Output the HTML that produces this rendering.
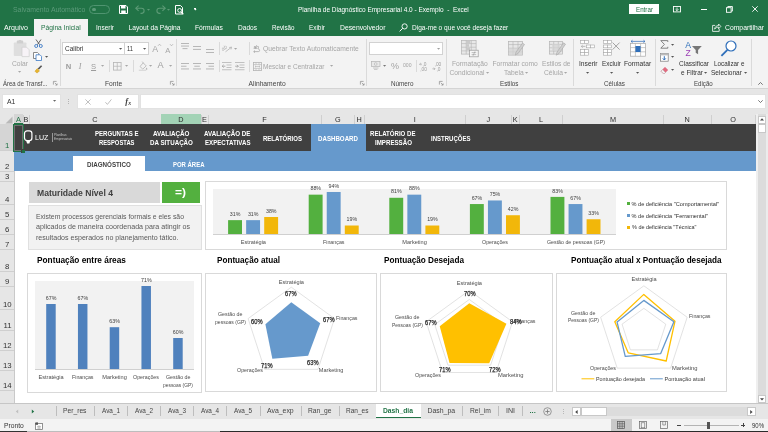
<!DOCTYPE html>
<html lang="pt-BR"><head><meta charset="utf-8"><title>Planilha de Diagnóstico Empresarial 4.0 - Exemplo - Excel</title>
<style>
html,body{margin:0;padding:0;}
body{width:768px;height:432px;overflow:hidden;background:#e6e6e6;font-family:"Liberation Sans",sans-serif;position:relative;}
.b{position:absolute;box-sizing:border-box;display:block;}
.t{position:absolute;white-space:nowrap;transform-origin:0 50%;display:block;}
svg{overflow:visible;}
</style></head><body><div id="app" class="b" style="left:0;top:0;width:768px;height:432px;will-change:transform;">
<div class="b " style="left:0.00px;top:0.00px;width:768.00px;height:36.00px;background:#217346;"></div>
<span class="t" style="left:13.00px;top:5.78px;font-size:6.7px;line-height:8.04px;color:#5c9a7a;transform:scaleX(1.030);">Salvamento Automático</span>
<div class="b" style="left:89px;top:4.5px;width:21px;height:9.5px;border:1px solid #4f9470;border-radius:5px;"></div>
<div class="b " style="left:92.00px;top:7.50px;width:3.50px;height:3.50px;background:#5d9c7a;border-radius:2px;"></div>
<svg class="b" style="left:119.00px;top:4.50px;" width="9" height="9" viewBox="0 0 9 9"><path d="M0.5 0.5h6.5l1.5 1.5v6.5h-8z" fill="none" stroke="#fff" stroke-width="1"/><rect x="2" y="0.5" width="4.5" height="3" fill="#fff"/><rect x="2.2" y="5.5" width="4.5" height="3" fill="#fff"/></svg>
<svg class="b" style="left:135.00px;top:5.00px;" width="11" height="8" viewBox="0 0 11 8"><path d="M1 3.2h5.5a2.6 2.6 0 0 1 0 5.2h-1" fill="none" stroke="#5c9a76" stroke-width="1.1"/><path d="M3.6 0.6L0.8 3.2l2.8 2.6" fill="none" stroke="#5c9a76" stroke-width="1.1"/></svg>
<svg class="b" style="left:147.00px;top:8.50px;" width="3" height="2" viewBox="0 0 3 2"><path d="M0 0h3l-1.5 1.8z" fill="#5c9a76"/></svg>
<svg class="b" style="left:155.00px;top:5.00px;" width="11" height="8" viewBox="0 0 11 8"><path d="M10 3.2h-5.5a2.6 2.6 0 0 0 0 5.2h1" fill="none" stroke="#5c9a76" stroke-width="1.1"/><path d="M7.4 0.6L10.2 3.2l-2.8 2.6" fill="none" stroke="#5c9a76" stroke-width="1.1"/></svg>
<svg class="b" style="left:167.00px;top:8.50px;" width="3" height="2" viewBox="0 0 3 2"><path d="M0 0h3l-1.5 1.8z" fill="#5c9a76"/></svg>
<svg class="b" style="left:175.00px;top:4.50px;" width="9" height="10" viewBox="0 0 9 10"><path d="M0.5 0.5h5l2 2v6.5h-7z" fill="none" stroke="#fff" stroke-width="1"/><circle cx="4.6" cy="5.4" r="1.9" fill="#217346" stroke="#fff" stroke-width="1"/><path d="M6 6.9l2.3 2.4" stroke="#fff" stroke-width="1.3"/></svg>
<div class="b " style="left:193.50px;top:7.50px;width:2.50px;height:0.80px;background:#fff;"></div>
<svg class="b" style="left:193.50px;top:9.00px;" width="3" height="2" viewBox="0 0 3 2"><path d="M0 0h2.6l-1.3 1.6z" fill="#fff"/></svg>
<span class="t" style="left:298.00px;top:5.88px;font-size:6.7px;line-height:8.04px;color:#fff;transform:scaleX(0.967);white-space:pre;">Planilha de Diagnóstico Empresarial 4.0 - Exemplo  -  Excel</span>
<div class="b " style="left:629.00px;top:3.50px;width:30.00px;height:10.50px;background:#fff;"></div>
<span class="t" style="left:635.50px;top:5.58px;font-size:6.7px;line-height:8.04px;color:#217346;transform:scaleX(0.932);">Entrar</span>
<svg class="b" style="left:673.00px;top:5.50px;" width="8" height="7" viewBox="0 0 8 7"><rect x="0.5" y="0.5" width="7" height="5.4" fill="none" stroke="#fff" stroke-width="0.9"/><path d="M4 1.5v3M2.6 3.3L4 4.7l1.4-1.4" fill="none" stroke="#fff" stroke-width="0.8"/></svg>
<div class="b " style="left:700.50px;top:9.00px;width:6.00px;height:0.90px;background:#fff;"></div>
<svg class="b" style="left:726.00px;top:5.50px;" width="7" height="7" viewBox="0 0 7 7"><rect x="0.5" y="1.7" width="4.6" height="4.6" fill="none" stroke="#fff" stroke-width="0.9"/><path d="M1.8 1.7v-1.2h4.6v4.6h-1.3" fill="none" stroke="#fff" stroke-width="0.9"/></svg>
<svg class="b" style="left:752.00px;top:6.00px;" width="6" height="6" viewBox="0 0 6 6"><path d="M0.3 0.3l5.4 5.4M5.7 0.3l-5.4 5.4" stroke="#fff" stroke-width="0.9"/></svg>
<div class="b " style="left:34.00px;top:19.00px;width:54.00px;height:17.00px;background:#f3f3f3;"></div>
<span class="t" style="left:4.00px;top:23.88px;font-size:6.7px;line-height:8.04px;color:#fff;transform:scaleX(1.056);">Arquivo</span>
<span class="t" style="left:41.00px;top:23.88px;font-size:6.7px;line-height:8.04px;color:#217346;">Página Inicial</span>
<span class="t" style="left:96.00px;top:23.88px;font-size:6.7px;line-height:8.04px;color:#fff;transform:scaleX(0.967);">Inserir</span>
<span class="t" style="left:128.50px;top:23.88px;font-size:6.7px;line-height:8.04px;color:#fff;">Layout da Página</span>
<span class="t" style="left:195.00px;top:23.88px;font-size:6.7px;line-height:8.04px;color:#fff;">Fórmulas</span>
<span class="t" style="left:238.00px;top:23.88px;font-size:6.7px;line-height:8.04px;color:#fff;transform:scaleX(0.981);">Dados</span>
<span class="t" style="left:272.00px;top:23.88px;font-size:6.7px;line-height:8.04px;color:#fff;transform:scaleX(0.930);">Revisão</span>
<span class="t" style="left:309.00px;top:23.88px;font-size:6.7px;line-height:8.04px;color:#fff;transform:scaleX(0.955);">Exibir</span>
<span class="t" style="left:340.00px;top:23.88px;font-size:6.7px;line-height:8.04px;color:#fff;transform:scaleX(1.018);">Desenvolvedor</span>
<svg class="b" style="left:399.00px;top:22.50px;" width="9" height="9" viewBox="0 0 9 9"><circle cx="5.6" cy="3.4" r="2.6" fill="none" stroke="#fff" stroke-width="0.9"/><path d="M3.7 5.3L0.6 8.4" stroke="#fff" stroke-width="1"/></svg>
<span class="t" style="left:411.50px;top:23.88px;font-size:6.7px;line-height:8.04px;color:#fff;transform:scaleX(0.981);">Diga-me o que você deseja fazer</span>
<svg class="b" style="left:711.50px;top:22.50px;" width="9" height="9" viewBox="0 0 9 9"><path d="M3.2 2.4h-2.6v6h6.6v-2.4" fill="none" stroke="#fff" stroke-width="0.8"/><path d="M2.6 6.2c0.3-2.4 1.8-3.6 4-3.6v-1.6l2.2 2.4-2.2 2.4v-1.6c-1.8 0-3 0.6-4 2z" fill="none" stroke="#fff" stroke-width="0.8"/></svg>
<span class="t" style="left:725.00px;top:23.88px;font-size:6.7px;line-height:8.04px;color:#fff;transform:scaleX(1.017);">Compartilhar</span>
<div class="b " style="left:0.00px;top:36.00px;width:768.00px;height:52.00px;background:#f3f3f3;"></div>
<div class="b " style="left:0.00px;top:88.00px;width:768.00px;height:0.80px;background:#d4d4d4;"></div>
<svg class="b" style="left:12.50px;top:40.00px;" width="17" height="18" viewBox="0 0 17 18"><rect x="0.8" y="2.4" width="12.6" height="13.6" rx="0.8" fill="#dedede"/><rect x="3.8" y="0.6" width="6.4" height="3" rx="0.9" fill="#cfcfcf"/><rect x="5.6" y="0" width="2.8" height="1.6" rx="0.8" fill="#cfcfcf"/><path d="M9 7.2h4.6l2.6 2.6v6.8H9z" fill="#f7f3f7" stroke="#cfcfcf" stroke-width="0.7"/></svg>
<span class="t" style="left:12.00px;top:59.88px;font-size:6.7px;line-height:8.04px;color:#a6a6a6;">Colar</span>
<svg class="b" style="left:18.40px;top:70.60px;" width="3.2" height="1.8" viewBox="0 0 3.2 1.8"><path d="M0 0h3.2l-1.6 1.8z" fill="#a6a6a6"/></svg>
<svg class="b" style="left:33.80px;top:39.00px;" width="9" height="9" viewBox="0 0 9 9"><path d="M2 0.5l3.6 5.2M7 0.5L3.4 5.7" stroke="#555" stroke-width="0.9" fill="none"/><circle cx="2.2" cy="7" r="1.5" fill="none" stroke="#3b78c4" stroke-width="0.9"/><circle cx="6.8" cy="7" r="1.5" fill="none" stroke="#3b78c4" stroke-width="0.9"/></svg>
<svg class="b" style="left:33.00px;top:52.00px;" width="9" height="9" viewBox="0 0 9 9"><path d="M0.5 0.5h4l1.2 1.2v4.8h-5.2z" fill="#fff" stroke="#6d6d6d" stroke-width="0.8"/><path d="M3 2.8h4l1.5 1.5v4.2h-5.5z" fill="#fff" stroke="#3b78c4" stroke-width="0.8"/></svg>
<svg class="b" style="left:44.90px;top:55.90px;" width="3.2" height="1.8" viewBox="0 0 3.2 1.8"><path d="M0 0h3.2l-1.6 1.8z" fill="#555"/></svg>
<svg class="b" style="left:34.00px;top:65.00px;" width="9" height="9" viewBox="0 0 9 9"><path d="M7.6 0.8L4.3 4.1" stroke="#555" stroke-width="1.6"/><path d="M1 6.2l2.2-2.6 2.3 2.3-2.6 2.2z" fill="#e8b52e" stroke="#c8961c" stroke-width="0.5"/></svg>
<span class="t" style="left:3.00px;top:79.58px;font-size:6.7px;line-height:8.04px;color:#444444;transform:scaleX(0.898);">Área de Transf...</span>
<svg class="b" style="left:53.00px;top:81.00px;" width="4.5" height="4.5" viewBox="0 0 4.5 4.5"><path d="M0.4 3.6v-3.2h3.2" fill="none" stroke="#8a8a8a" stroke-width="0.7"/><path d="M1.8 1.8l2.2 2.2M4.1 2.4v1.7h-1.7" fill="none" stroke="#8a8a8a" stroke-width="0.7"/></svg>
<div class="b " style="left:59.50px;top:39.00px;width:0.80px;height:47.00px;background:#dadada;"></div>
<div class="b" style="left:62px;top:42px;width:63px;height:13px;background:#fff;border:1px solid #d2d2d2;"></div>
<span class="t" style="left:64.50px;top:45.28px;font-size:6.7px;line-height:8.04px;color:#333;transform:scaleX(0.974);">Calibri</span>
<svg class="b" style="left:118.70px;top:47.80px;" width="3.2" height="1.8" viewBox="0 0 3.2 1.8"><path d="M0 0h3.2l-1.6 1.8z" fill="#555"/></svg>
<div class="b" style="left:124px;top:42px;width:25px;height:13px;background:#fff;border:1px solid #d2d2d2;"></div>
<span class="t" style="left:127.00px;top:45.28px;font-size:6.7px;line-height:8.04px;color:#333;transform:scaleX(0.863);">11</span>
<svg class="b" style="left:142.70px;top:47.80px;" width="3.2" height="1.8" viewBox="0 0 3.2 1.8"><path d="M0 0h3.2l-1.6 1.8z" fill="#555"/></svg>
<span class="t" style="left:152.30px;top:44.32px;font-size:8.8px;line-height:10.56px;color:#a6a6a6;">A</span>
<svg class="b" style="left:158.00px;top:43.50px;" width="3" height="2" viewBox="0 0 3 2"><path d="M0 1.8l1.5-1.6 1.5 1.6" fill="none" stroke="#a6a6a6" stroke-width="0.7"/></svg>
<span class="t" style="left:165.30px;top:45.54px;font-size:7.6px;line-height:9.12px;color:#a6a6a6;">A</span>
<svg class="b" style="left:170.00px;top:43.50px;" width="3" height="2" viewBox="0 0 3 2"><path d="M0 0.2l1.5 1.6 1.5-1.6" fill="none" stroke="#a6a6a6" stroke-width="0.7"/></svg>
<span class="t" style="left:65.80px;top:62.04px;font-size:7.6px;line-height:9.12px;color:#9c9c9c;font-weight:bold;">N</span>
<span class="t" style="left:78.80px;top:61.80px;font-size:8px;line-height:9.60px;color:#9c9c9c;font-style:italic;font-family:&quot;Liberation Serif&quot;,serif;">I</span>
<span class="t" style="left:91.00px;top:62.04px;font-size:7.6px;line-height:9.12px;color:#9c9c9c;text-decoration:underline;">S</span>
<svg class="b" style="left:100.90px;top:65.40px;" width="3.2" height="1.8" viewBox="0 0 3.2 1.8"><path d="M0 0h3.2l-1.6 1.8z" fill="#a6a6a6"/></svg>
<div class="b " style="left:108.50px;top:60.00px;width:0.80px;height:12.00px;background:#dadada;"></div>
<svg class="b" style="left:113.00px;top:61.80px;" width="8.5" height="8.5" viewBox="0 0 8.5 8.5"><rect x="0.4" y="0.4" width="7.7" height="7.7" fill="none" stroke="#b4b4b4" stroke-width="0.8"/><path d="M4.25 0.4v7.7M0.4 4.25h7.7" stroke="#b4b4b4" stroke-width="0.7"/></svg>
<svg class="b" style="left:124.90px;top:65.40px;" width="3.2" height="1.8" viewBox="0 0 3.2 1.8"><path d="M0 0h3.2l-1.6 1.8z" fill="#a6a6a6"/></svg>
<div class="b " style="left:132.50px;top:60.00px;width:0.80px;height:12.00px;background:#dadada;"></div>
<svg class="b" style="left:137.50px;top:61.00px;" width="10" height="10" viewBox="0 0 10 10"><path d="M2 5.5l3.2-3.6 3 3-3.4 3.2z" fill="none" stroke="#b4b4b4" stroke-width="0.8"/><path d="M4.2 0.6l1.4 1.6" stroke="#b4b4b4" stroke-width="0.8"/><rect x="0.8" y="8.6" width="7.4" height="1.3" fill="#d9d9d9"/><path d="M8.6 6.4c0.5 0.8 0.8 1.2 0.8 1.6a0.8 0.8 0 0 1-1.6 0c0-0.4 0.3-0.8 0.8-1.6z" fill="#b4b4b4"/></svg>
<svg class="b" style="left:149.40px;top:65.40px;" width="3.2" height="1.8" viewBox="0 0 3.2 1.8"><path d="M0 0h3.2l-1.6 1.8z" fill="#a6a6a6"/></svg>
<span class="t" style="left:157.60px;top:60.28px;font-size:9.2px;line-height:11.04px;color:#a0a0a0;">A</span>
<svg class="b" style="left:168.70px;top:65.40px;" width="3.2" height="1.8" viewBox="0 0 3.2 1.8"><path d="M0 0h3.2l-1.6 1.8z" fill="#a6a6a6"/></svg>
<span class="t" style="left:105.00px;top:79.58px;font-size:6.7px;line-height:8.04px;color:#444444;">Fonte</span>
<svg class="b" style="left:170.00px;top:81.00px;" width="4.5" height="4.5" viewBox="0 0 4.5 4.5"><path d="M0.4 3.6v-3.2h3.2" fill="none" stroke="#8a8a8a" stroke-width="0.7"/><path d="M1.8 1.8l2.2 2.2M4.1 2.4v1.7h-1.7" fill="none" stroke="#8a8a8a" stroke-width="0.7"/></svg>
<div class="b " style="left:176.00px;top:39.00px;width:0.80px;height:47.00px;background:#dadada;"></div>
<svg class="b" style="left:181.00px;top:43.40px;" width="9" height="8" viewBox="0 0 9 8"><rect x="0" y="0.00" width="8" height="0.9" fill="#b0b0b0"/><rect x="0" y="2.60" width="8" height="0.9" fill="#b0b0b0"/><rect x="1.5" y="5.20" width="5" height="0.9" fill="#b0b0b0"/></svg>
<svg class="b" style="left:193.30px;top:46.00px;" width="9" height="8" viewBox="0 0 9 8"><rect x="0" y="0.00" width="8" height="0.9" fill="#b0b0b0"/><rect x="0" y="2.90" width="8" height="0.9" fill="#b0b0b0"/></svg>
<svg class="b" style="left:205.80px;top:48.60px;" width="9" height="8" viewBox="0 0 9 8"><rect x="0" y="0.00" width="8" height="0.9" fill="#b0b0b0"/><rect x="0" y="3.00" width="8" height="0.9" fill="#b0b0b0"/></svg>
<div class="b " style="left:218.50px;top:42.00px;width:0.80px;height:13.00px;background:#dadada;"></div>
<svg class="b" style="left:222.00px;top:42.50px;" width="11" height="10" viewBox="0 0 11 10"><text x="0" y="6.5" font-size="5.5" fill="#b4b4b4" font-style="italic" transform="rotate(-35 3 6)">ab</text><path d="M3.5 8.8l6-4.6M9.5 4.2l-2.3 0.3M9.5 4.2l-0.5 2.2" stroke="#b4b4b4" stroke-width="0.8" fill="none"/></svg>
<svg class="b" style="left:233.90px;top:47.90px;" width="3.2" height="1.8" viewBox="0 0 3.2 1.8"><path d="M0 0h3.2l-1.6 1.8z" fill="#a6a6a6"/></svg>
<div class="b " style="left:248.50px;top:42.00px;width:0.80px;height:13.00px;background:#dadada;"></div>
<svg class="b" style="left:253.00px;top:43.50px;" width="9" height="10" viewBox="0 0 9 10"><text x="0.5" y="4.6" font-size="5" fill="#8c8c8c">ab</text><path d="M0.8 7.6h4.6a1.2 1.2 0 0 0 0-2.4" fill="none" stroke="#a0a0a0" stroke-width="0.7"/><path d="M2 6.5l-1.3 1.1 1.3 1.1" fill="none" stroke="#a0a0a0" stroke-width="0.7"/></svg>
<span class="t" style="left:263.00px;top:45.28px;font-size:6.7px;line-height:8.04px;color:#a6a6a6;">Quebrar Texto Automaticamente</span>
<svg class="b" style="left:181.00px;top:63.00px;" width="9" height="8" viewBox="0 0 9 8"><rect x="0" y="0.00" width="8" height="0.9" fill="#b0b0b0"/><rect x="0" y="2.75" width="5.5" height="0.9" fill="#b0b0b0"/><rect x="0" y="5.50" width="8" height="0.9" fill="#b0b0b0"/></svg>
<svg class="b" style="left:193.30px;top:63.00px;" width="9" height="8" viewBox="0 0 9 8"><rect x="0" y="0.00" width="8" height="0.9" fill="#b0b0b0"/><rect x="1.3" y="2.75" width="5.5" height="0.9" fill="#b0b0b0"/><rect x="0" y="5.50" width="8" height="0.9" fill="#b0b0b0"/></svg>
<svg class="b" style="left:205.80px;top:63.00px;" width="9" height="8" viewBox="0 0 9 8"><rect x="0" y="0.00" width="8" height="0.9" fill="#b0b0b0"/><rect x="2.5" y="2.75" width="5.5" height="0.9" fill="#b0b0b0"/><rect x="0" y="5.50" width="8" height="0.9" fill="#b0b0b0"/></svg>
<div class="b " style="left:218.50px;top:60.00px;width:0.80px;height:12.00px;background:#dadada;"></div>
<svg class="b" style="left:222.00px;top:62.00px;" width="10" height="9" viewBox="0 0 10 9"><rect x="0" y="0.2" width="9.5" height="0.8" fill="#b4b4b4"/><rect x="4.5" y="2.6" width="5" height="0.8" fill="#b4b4b4"/><rect x="4.5" y="5" width="5" height="0.8" fill="#b4b4b4"/><rect x="0" y="7.4" width="9.5" height="0.8" fill="#b4b4b4"/><path d="M3.4 4.2h-3M1.6 2.8l-1.4 1.4 1.4 1.4" stroke="#9a9a9a" stroke-width="0.8" fill="none"/></svg>
<svg class="b" style="left:235.00px;top:62.00px;" width="10" height="9" viewBox="0 0 10 9"><rect x="0" y="0.2" width="9.5" height="0.8" fill="#b4b4b4"/><rect x="4.5" y="2.6" width="5" height="0.8" fill="#b4b4b4"/><rect x="4.5" y="5" width="5" height="0.8" fill="#b4b4b4"/><rect x="0" y="7.4" width="9.5" height="0.8" fill="#b4b4b4"/><path d="M0.2 4.2h3M2 2.8l1.4 1.4-1.4 1.4" stroke="#9a9a9a" stroke-width="0.8" fill="none"/></svg>
<div class="b " style="left:248.50px;top:60.00px;width:0.80px;height:12.00px;background:#dadada;"></div>
<svg class="b" style="left:252.50px;top:61.50px;" width="9" height="9" viewBox="0 0 9 9"><rect x="0.4" y="0.4" width="8.2" height="8.2" fill="none" stroke="#b4b4b4" stroke-width="0.8"/><path d="M0.4 2.6h8.2M0.4 6.4h8.2M3 0.4v2.2M6 0.4v2.2M3 6.4v2.2M6 6.4v2.2" stroke="#b4b4b4" stroke-width="0.6"/><path d="M2 4.5h5M3 3.6l-1 0.9 1 0.9M6 3.6l1 0.9-1 0.9" stroke="#b4b4b4" stroke-width="0.6" fill="none"/></svg>
<span class="t" style="left:263.00px;top:62.58px;font-size:6.7px;line-height:8.04px;color:#a6a6a6;transform:scaleX(0.972);">Mesclar e Centralizar</span>
<svg class="b" style="left:329.90px;top:65.40px;" width="3.2" height="1.8" viewBox="0 0 3.2 1.8"><path d="M0 0h3.2l-1.6 1.8z" fill="#a6a6a6"/></svg>
<span class="t" style="left:248.50px;top:79.58px;font-size:6.7px;line-height:8.04px;color:#444444;">Alinhamento</span>
<svg class="b" style="left:360.00px;top:81.00px;" width="4.5" height="4.5" viewBox="0 0 4.5 4.5"><path d="M0.4 3.6v-3.2h3.2" fill="none" stroke="#8a8a8a" stroke-width="0.7"/><path d="M1.8 1.8l2.2 2.2M4.1 2.4v1.7h-1.7" fill="none" stroke="#8a8a8a" stroke-width="0.7"/></svg>
<div class="b " style="left:366.00px;top:39.00px;width:0.80px;height:47.00px;background:#dadada;"></div>
<div class="b" style="left:369px;top:42px;width:74px;height:13px;background:#fff;border:1px solid #d2d2d2;"></div>
<svg class="b" style="left:436.90px;top:47.80px;" width="3.2" height="1.8" viewBox="0 0 3.2 1.8"><path d="M0 0h3.2l-1.6 1.8z" fill="#a0a0a0"/></svg>
<svg class="b" style="left:371.00px;top:61.00px;" width="10" height="9" viewBox="0 0 10 9"><rect x="0.4" y="0.4" width="8.6" height="5.2" fill="#e9e9e9" stroke="#b4b4b4" stroke-width="0.7"/><circle cx="4.7" cy="3" r="1.4" fill="none" stroke="#b4b4b4" stroke-width="0.6"/><path d="M2 7h5.5M3 8.4h3.5" stroke="#b4b4b4" stroke-width="0.7"/></svg>
<svg class="b" style="left:382.90px;top:65.40px;" width="3.2" height="1.8" viewBox="0 0 3.2 1.8"><path d="M0 0h3.2l-1.6 1.8z" fill="#777"/></svg>
<span class="t" style="left:391.00px;top:60.80px;font-size:9px;line-height:10.80px;color:#a3a3a3;">%</span>
<span class="t" style="left:403.00px;top:62.44px;font-size:5.6px;line-height:6.72px;color:#a3a3a3;transform:scaleX(0.910);">000</span>
<div class="b " style="left:415.50px;top:60.00px;width:0.80px;height:12.00px;background:#dadada;"></div>
<svg class="b" style="left:419.00px;top:61.50px;" width="10" height="9" viewBox="0 0 10 9"><text x="3.4" y="4" font-size="4.8" fill="#9c9c9c">,0</text><text x="1.2" y="8.6" font-size="4.8" fill="#9c9c9c">,00</text><path d="M3 2.2h-2.4M1.8 1l-1.2 1.2 1.2 1.2" stroke="#9c9c9c" stroke-width="0.6" fill="none"/></svg>
<svg class="b" style="left:432.00px;top:61.50px;" width="10" height="9" viewBox="0 0 10 9"><text x="2.6" y="4" font-size="4.8" fill="#9c9c9c">,00</text><text x="4.4" y="8.6" font-size="4.8" fill="#9c9c9c">,0</text><path d="M0.4 6.8h2.6M1.8 5.6l1.2 1.2-1.2 1.2" stroke="#9c9c9c" stroke-width="0.6" fill="none"/></svg>
<span class="t" style="left:390.50px;top:79.58px;font-size:6.7px;line-height:8.04px;color:#444444;transform:scaleX(0.944);">Número</span>
<svg class="b" style="left:439.00px;top:81.00px;" width="4.5" height="4.5" viewBox="0 0 4.5 4.5"><path d="M0.4 3.6v-3.2h3.2" fill="none" stroke="#8a8a8a" stroke-width="0.7"/><path d="M1.8 1.8l2.2 2.2M4.1 2.4v1.7h-1.7" fill="none" stroke="#8a8a8a" stroke-width="0.7"/></svg>
<div class="b " style="left:445.50px;top:39.00px;width:0.80px;height:47.00px;background:#dadada;"></div>
<svg class="b" style="left:461.00px;top:40.00px;" width="18" height="18" viewBox="0 0 18 18"><rect x="0.4" y="0.4" width="14.7" height="13.7" fill="#e8e8e8" stroke="#b4b4b4" stroke-width="0.7"/><path d="M0.4 3.6h14.7" stroke="#b4b4b4" stroke-width="0.6"/><path d="M0.4 7.2h14.7" stroke="#b4b4b4" stroke-width="0.6"/><path d="M0.4 10.9h14.7" stroke="#b4b4b4" stroke-width="0.6"/><path d="M5.2 0.4v13.7" stroke="#b4b4b4" stroke-width="0.6"/><path d="M10.3 0.4v13.7" stroke="#b4b4b4" stroke-width="0.6"/><rect x="5" y="1" width="4.3" height="2.6" fill="#c9c9c9"/><rect x="5" y="4.2" width="3" height="2.6" fill="#c9c9c9"/><rect x="5" y="7.6" width="4" height="2.6" fill="#c9c9c9"/><rect x="8.6" y="10.2" width="8.6" height="6.6" fill="#f6f6f6" stroke="#9a9a9a" stroke-width="0.7"/><path d="M10.6 12.6h4.6M10.6 14.6h4.6M14 11.4l-2 4.4" stroke="#9a9a9a" stroke-width="0.6"/></svg>
<span class="t" style="left:452.00px;top:59.88px;font-size:6.7px;line-height:8.04px;color:#a6a6a6;">Formatação</span>
<span class="t" style="left:449.50px;top:69.18px;font-size:6.7px;line-height:8.04px;color:#a6a6a6;">Condicional</span>
<svg class="b" style="left:486.40px;top:72.10px;" width="3.2" height="1.8" viewBox="0 0 3.2 1.8"><path d="M0 0h3.2l-1.6 1.8z" fill="#a6a6a6"/></svg>
<svg class="b" style="left:508.00px;top:41.00px;" width="18" height="18" viewBox="0 0 18 18"><rect x="0.4" y="0.4" width="14.2" height="13.7" fill="#e8e8e8" stroke="#b4b4b4" stroke-width="0.7"/><path d="M0.4 3.6h14.2" stroke="#b4b4b4" stroke-width="0.6"/><path d="M0.4 7.2h14.2" stroke="#b4b4b4" stroke-width="0.6"/><path d="M0.4 10.9h14.2" stroke="#b4b4b4" stroke-width="0.6"/><path d="M5.0 0.4v13.7" stroke="#b4b4b4" stroke-width="0.6"/><path d="M10.0 0.4v13.7" stroke="#b4b4b4" stroke-width="0.6"/><rect x="0.8" y="7.4" width="13.4" height="6.6" fill="#d4d4d4" opacity="0.7"/><path d="M16.5 3.5l-6.5 9-2.8 1.6 0.8-3 6.5-9z" fill="#cfcfcf" stroke="#a8a8a8" stroke-width="0.6"/></svg>
<span class="t" style="left:492.50px;top:59.88px;font-size:6.7px;line-height:8.04px;color:#a6a6a6;">Formatar como</span>
<span class="t" style="left:504.00px;top:69.18px;font-size:6.7px;line-height:8.04px;color:#a6a6a6;">Tabela</span>
<svg class="b" style="left:524.90px;top:72.10px;" width="3.2" height="1.8" viewBox="0 0 3.2 1.8"><path d="M0 0h3.2l-1.6 1.8z" fill="#a6a6a6"/></svg>
<svg class="b" style="left:548.50px;top:40.50px;" width="19" height="18" viewBox="0 0 19 18"><rect x="0.4" y="0.4" width="13.2" height="12.7" fill="#e8e8e8" stroke="#b4b4b4" stroke-width="0.7"/><path d="M0.4 3.4h13.2" stroke="#b4b4b4" stroke-width="0.6"/><path d="M0.4 6.8h13.2" stroke="#b4b4b4" stroke-width="0.6"/><path d="M0.4 10.1h13.2" stroke="#b4b4b4" stroke-width="0.6"/><path d="M4.7 0.4v12.7" stroke="#b4b4b4" stroke-width="0.6"/><path d="M9.3 0.4v12.7" stroke="#b4b4b4" stroke-width="0.6"/><rect x="3" y="3" width="8" height="7" fill="#d4d4d4" opacity="0.7"/><path d="M16.5 3.2l-6.5 9.4-2.8 1.6 0.8-3 6.5-9.4z" fill="#cfcfcf" stroke="#a8a8a8" stroke-width="0.6"/></svg>
<span class="t" style="left:541.50px;top:59.88px;font-size:6.7px;line-height:8.04px;color:#a6a6a6;transform:scaleX(0.981);">Estilos de</span>
<span class="t" style="left:544.00px;top:69.18px;font-size:6.7px;line-height:8.04px;color:#a6a6a6;">Célula</span>
<svg class="b" style="left:564.40px;top:72.10px;" width="3.2" height="1.8" viewBox="0 0 3.2 1.8"><path d="M0 0h3.2l-1.6 1.8z" fill="#a6a6a6"/></svg>
<span class="t" style="left:500.00px;top:79.58px;font-size:6.7px;line-height:8.04px;color:#444444;transform:scaleX(0.937);">Estilos</span>
<div class="b " style="left:573.00px;top:39.00px;width:0.80px;height:47.00px;background:#dadada;"></div>
<svg class="b" style="left:580.00px;top:40.00px;" width="16" height="16" viewBox="0 0 16 16"><rect x="0.4" y="0.6" width="4" height="2.8" fill="#fff" stroke="#a6a6a6" stroke-width="0.6"/><rect x="4.4" y="0.6" width="4" height="2.8" fill="#fff" stroke="#a6a6a6" stroke-width="0.6"/><rect x="6.4" y="5" width="4" height="2.8" fill="#fff" stroke="#a6a6a6" stroke-width="0.6"/><rect x="10.4" y="5" width="4" height="2.8" fill="#fff" stroke="#a6a6a6" stroke-width="0.6"/><rect x="0.4" y="9.6" width="4" height="2.8" fill="#fff" stroke="#a6a6a6" stroke-width="0.6"/><rect x="4.4" y="9.6" width="4" height="2.8" fill="#fff" stroke="#a6a6a6" stroke-width="0.6"/><rect x="0.4" y="12.4" width="4" height="2.8" fill="#fff" stroke="#a6a6a6" stroke-width="0.6"/><rect x="4.4" y="12.4" width="4" height="2.8" fill="#fff" stroke="#a6a6a6" stroke-width="0.6"/><path d="M5.4 6.4h-4M2.8 5l-1.5 1.4 1.5 1.4" stroke="#a6a6a6" stroke-width="0.7" fill="none"/></svg>
<span class="t" style="left:579.00px;top:59.88px;font-size:6.7px;line-height:8.04px;color:#333;">Inserir</span>
<svg class="b" style="left:586.40px;top:71.60px;" width="3.2" height="1.8" viewBox="0 0 3.2 1.8"><path d="M0 0h3.2l-1.6 1.8z" fill="#555"/></svg>
<svg class="b" style="left:603.00px;top:40.00px;" width="18" height="16" viewBox="0 0 18 16"><rect x="0.4" y="0.6" width="4" height="2.8" fill="#fff" stroke="#a6a6a6" stroke-width="0.6"/><rect x="4.4" y="0.6" width="4" height="2.8" fill="#fff" stroke="#a6a6a6" stroke-width="0.6"/><rect x="0.4" y="5" width="4" height="2.8" fill="#fff" stroke="#a6a6a6" stroke-width="0.6"/><rect x="4.4" y="5" width="4" height="2.8" fill="#fff" stroke="#a6a6a6" stroke-width="0.6"/><rect x="0.4" y="9.6" width="4" height="2.8" fill="#fff" stroke="#a6a6a6" stroke-width="0.6"/><rect x="4.4" y="9.6" width="4" height="2.8" fill="#fff" stroke="#a6a6a6" stroke-width="0.6"/><rect x="0.4" y="12.4" width="4" height="2.8" fill="#fff" stroke="#a6a6a6" stroke-width="0.6"/><rect x="4.4" y="12.4" width="4" height="2.8" fill="#fff" stroke="#a6a6a6" stroke-width="0.6"/><path d="M9.6 2.6l7 7M16.6 2.6l-7 7" stroke="#9a9a9a" stroke-width="0.9" fill="none"/></svg>
<span class="t" style="left:602.00px;top:59.88px;font-size:6.7px;line-height:8.04px;color:#333;transform:scaleX(0.945);">Excluir</span>
<svg class="b" style="left:609.90px;top:71.60px;" width="3.2" height="1.8" viewBox="0 0 3.2 1.8"><path d="M0 0h3.2l-1.6 1.8z" fill="#555"/></svg>
<svg class="b" style="left:629.50px;top:39.50px;" width="17" height="17" viewBox="0 0 17 17"><rect x="0.6" y="3.6" width="15" height="12.6" fill="#fff" stroke="#a6a6a6" stroke-width="0.7"/><path d="M0.6 7.6h15M0.6 11.8h15M5.4 3.6v12.6M10.6 3.6v12.6" stroke="#a6a6a6" stroke-width="0.6"/><rect x="5.4" y="6" width="5.2" height="6" fill="#2f6fba"/><path d="M1 1.4h14M2.6 0.2l-1.6 1.2 1.6 1.2M13.4 0.2l1.6 1.2-1.6 1.2" stroke="#2f6fba" stroke-width="0.7" fill="none"/></svg>
<span class="t" style="left:624.00px;top:59.88px;font-size:6.7px;line-height:8.04px;color:#333;">Formatar</span>
<svg class="b" style="left:635.90px;top:71.60px;" width="3.2" height="1.8" viewBox="0 0 3.2 1.8"><path d="M0 0h3.2l-1.6 1.8z" fill="#555"/></svg>
<span class="t" style="left:604.00px;top:79.58px;font-size:6.7px;line-height:8.04px;color:#444444;transform:scaleX(0.940);">Células</span>
<div class="b " style="left:655.00px;top:39.00px;width:0.80px;height:47.00px;background:#dadada;"></div>
<svg class="b" style="left:660.00px;top:40.00px;" width="9" height="9" viewBox="0 0 9 9"><path d="M7.8 2V0.6H0.8l3.6 3.8-3.6 3.8h7V6.8" fill="none" stroke="#777" stroke-width="0.9"/></svg>
<svg class="b" style="left:671.40px;top:43.60px;" width="3.2" height="1.8" viewBox="0 0 3.2 1.8"><path d="M0 0h3.2l-1.6 1.8z" fill="#555"/></svg>
<svg class="b" style="left:660.00px;top:52.50px;" width="9" height="9" viewBox="0 0 9 9"><rect x="0.4" y="0.4" width="7.8" height="7.8" fill="#fff" stroke="#777" stroke-width="0.7"/><rect x="0.4" y="0.4" width="7.8" height="2" fill="#bbb"/><path d="M4.3 3.2v3.6M2.8 5.4l1.5 1.6 1.5-1.6" stroke="#2f6fba" stroke-width="1" fill="none"/></svg>
<svg class="b" style="left:671.40px;top:56.10px;" width="3.2" height="1.8" viewBox="0 0 3.2 1.8"><path d="M0 0h3.2l-1.6 1.8z" fill="#555"/></svg>
<svg class="b" style="left:660.00px;top:66.00px;" width="9" height="8" viewBox="0 0 9 8"><path d="M1 5.2l4-4 2.8 2.8-4 4z" fill="#e36a7f" stroke="#d04a62" stroke-width="0.4"/><path d="M1 5.2l1.6-1.6 2.8 2.8-1.6 1.6z" fill="#f3f3f3" stroke="#aaa" stroke-width="0.4"/></svg>
<svg class="b" style="left:671.40px;top:69.10px;" width="3.2" height="1.8" viewBox="0 0 3.2 1.8"><path d="M0 0h3.2l-1.6 1.8z" fill="#555"/></svg>
<svg class="b" style="left:685.00px;top:39.50px;" width="18" height="17" viewBox="0 0 18 17"><text x="0.3" y="8.4" font-size="8.6" fill="#2f6fba">A</text><text x="0.6" y="16" font-size="8.6" fill="#9b3fb5">Z</text><path d="M7 6h9.8l-3.7 4v4.2l-2.4-1.4v-2.8z" fill="#777"/></svg>
<span class="t" style="left:678.70px;top:59.88px;font-size:6.7px;line-height:8.04px;color:#333;transform:scaleX(0.971);">Classificar</span>
<span class="t" style="left:681.00px;top:69.18px;font-size:6.7px;line-height:8.04px;color:#333;transform:scaleX(0.969);">e Filtrar</span>
<svg class="b" style="left:704.40px;top:72.10px;" width="3.2" height="1.8" viewBox="0 0 3.2 1.8"><path d="M0 0h3.2l-1.6 1.8z" fill="#555"/></svg>
<svg class="b" style="left:720.00px;top:39.50px;" width="18" height="17" viewBox="0 0 18 17"><circle cx="11" cy="6" r="5" fill="#fff" stroke="#2f6fba" stroke-width="1.2"/><path d="M7.4 9.8L1.4 15.8" stroke="#2f6fba" stroke-width="1.8"/></svg>
<span class="t" style="left:713.70px;top:59.88px;font-size:6.7px;line-height:8.04px;color:#333;transform:scaleX(0.941);">Localizar e</span>
<span class="t" style="left:711.00px;top:69.18px;font-size:6.7px;line-height:8.04px;color:#333;transform:scaleX(0.979);">Selecionar</span>
<svg class="b" style="left:743.90px;top:72.10px;" width="3.2" height="1.8" viewBox="0 0 3.2 1.8"><path d="M0 0h3.2l-1.6 1.8z" fill="#555"/></svg>
<span class="t" style="left:693.50px;top:79.58px;font-size:6.7px;line-height:8.04px;color:#444444;transform:scaleX(0.918);">Edição</span>
<div class="b " style="left:751.00px;top:39.00px;width:0.80px;height:47.00px;background:#dadada;"></div>
<svg class="b" style="left:757.50px;top:81.50px;" width="5" height="3" viewBox="0 0 5 3"><path d="M0.3 2.7l2.2-2.2 2.2 2.2" fill="none" stroke="#555" stroke-width="0.8"/></svg>
<div class="b " style="left:0.00px;top:88.80px;width:768.00px;height:24.70px;background:#e6e6e6;"></div>
<div class="b" style="left:2px;top:94px;width:59px;height:15px;background:#fff;border:1px solid #e2e2e2;"></div>
<span class="t" style="left:7.00px;top:98.06px;font-size:6.9px;line-height:8.28px;color:#333;">A1</span>
<svg class="b" style="left:52.70px;top:99.60px;" width="3.2" height="1.8" viewBox="0 0 3.2 1.8"><path d="M0 0h3.2l-1.6 1.8z" fill="#666"/></svg>
<div class="b " style="left:68.00px;top:98.50px;width:0.90px;height:0.90px;background:#b4b4b4;"></div>
<div class="b " style="left:68.00px;top:100.80px;width:0.90px;height:0.90px;background:#b4b4b4;"></div>
<div class="b " style="left:68.00px;top:103.10px;width:0.90px;height:0.90px;background:#b4b4b4;"></div>
<div class="b" style="left:77px;top:94px;width:62px;height:15px;background:#fff;border:1px solid #e2e2e2;"></div>
<svg class="b" style="left:84.50px;top:98.50px;" width="6" height="6" viewBox="0 0 6 6"><path d="M0.4 0.4l5.2 5.2M5.6 0.4L0.4 5.6" stroke="#b0b0b0" stroke-width="0.8"/></svg>
<svg class="b" style="left:104.50px;top:98.50px;" width="7" height="6" viewBox="0 0 7 6"><path d="M0.4 3.2l2 2.2 4-5" fill="none" stroke="#b0b0b0" stroke-width="0.8"/></svg>
<span class="t" style="left:125.30px;top:96.56px;font-size:8.4px;line-height:10.08px;color:#444;font-weight:bold;font-style:italic;font-family:&quot;Liberation Serif&quot;,serif;">f</span>
<span class="t" style="left:128.20px;top:99.52px;font-size:5.8px;line-height:6.96px;color:#444;font-weight:bold;font-style:italic;font-family:&quot;Liberation Serif&quot;,serif;">x</span>
<div class="b" style="left:140px;top:94px;width:626px;height:15px;background:#fff;border:1px solid #e2e2e2;"></div>
<svg class="b" style="left:757.50px;top:99.50px;" width="5" height="3" viewBox="0 0 5 3"><path d="M0.3 0.3l2.2 2.2 2.2-2.2" fill="none" stroke="#555" stroke-width="0.8"/></svg>
<div class="b " style="left:0.00px;top:113.50px;width:768.00px;height:290.00px;background:#e6e6e6;"></div>
<div class="b " style="left:14.00px;top:124.00px;width:741.70px;height:279.00px;background:#fff;"></div>
<svg class="b" style="left:5.00px;top:115.50px;" width="8" height="8" viewBox="0 0 8 8"><path d="M7.5 0.5v7h-7z" fill="#b9b9b9"/></svg>
<div class="b " style="left:14.00px;top:113.50px;width:9.00px;height:10.50px;background:#d5d5d5;"></div>
<div class="b " style="left:14.00px;top:123.00px;width:9.00px;height:1.00px;background:#217346;"></div>
<span class="t" style="left:16.07px;top:115.92px;font-size:7.3px;line-height:8.76px;color:#217346;">A</span>
<div class="b " style="left:22.60px;top:114.50px;width:0.80px;height:9.00px;background:#cfcfcf;"></div>
<span class="t" style="left:23.57px;top:115.92px;font-size:7.3px;line-height:8.76px;color:#2e2e2e;">B</span>
<div class="b " style="left:28.60px;top:114.50px;width:0.80px;height:9.00px;background:#cfcfcf;"></div>
<span class="t" style="left:92.36px;top:115.92px;font-size:7.3px;line-height:8.76px;color:#2e2e2e;">C</span>
<div class="b " style="left:160.60px;top:114.50px;width:0.80px;height:9.00px;background:#cfcfcf;"></div>
<div class="b " style="left:161.00px;top:113.50px;width:40.00px;height:10.50px;background:#a3d3b6;"></div>
<span class="t" style="left:178.36px;top:115.92px;font-size:7.3px;line-height:8.76px;color:#2e2e2e;">D</span>
<div class="b " style="left:200.60px;top:114.50px;width:0.80px;height:9.00px;background:#cfcfcf;"></div>
<span class="t" style="left:202.07px;top:115.92px;font-size:7.3px;line-height:8.76px;color:#2e2e2e;">E</span>
<div class="b " style="left:207.60px;top:114.50px;width:0.80px;height:9.00px;background:#cfcfcf;"></div>
<span class="t" style="left:262.27px;top:115.92px;font-size:7.3px;line-height:8.76px;color:#2e2e2e;">F</span>
<div class="b " style="left:320.60px;top:114.50px;width:0.80px;height:9.00px;background:#cfcfcf;"></div>
<span class="t" style="left:334.91px;top:115.92px;font-size:7.3px;line-height:8.76px;color:#2e2e2e;">G</span>
<div class="b " style="left:354.10px;top:114.50px;width:0.80px;height:9.00px;background:#cfcfcf;"></div>
<span class="t" style="left:356.61px;top:115.92px;font-size:7.3px;line-height:8.76px;color:#2e2e2e;">H</span>
<div class="b " style="left:363.60px;top:114.50px;width:0.80px;height:9.00px;background:#cfcfcf;"></div>
<span class="t" style="left:413.74px;top:115.92px;font-size:7.3px;line-height:8.76px;color:#2e2e2e;">I</span>
<div class="b " style="left:465.10px;top:114.50px;width:0.80px;height:9.00px;background:#cfcfcf;"></div>
<span class="t" style="left:486.43px;top:115.92px;font-size:7.3px;line-height:8.76px;color:#2e2e2e;">J</span>
<div class="b " style="left:510.60px;top:114.50px;width:0.80px;height:9.00px;background:#cfcfcf;"></div>
<span class="t" style="left:512.82px;top:115.92px;font-size:7.3px;line-height:8.76px;color:#2e2e2e;">K</span>
<div class="b " style="left:519.10px;top:114.50px;width:0.80px;height:9.00px;background:#cfcfcf;"></div>
<span class="t" style="left:538.97px;top:115.92px;font-size:7.3px;line-height:8.76px;color:#2e2e2e;">L</span>
<div class="b " style="left:562.10px;top:114.50px;width:0.80px;height:9.00px;background:#cfcfcf;"></div>
<span class="t" style="left:609.96px;top:115.92px;font-size:7.3px;line-height:8.76px;color:#2e2e2e;">M</span>
<div class="b " style="left:663.10px;top:114.50px;width:0.80px;height:9.00px;background:#cfcfcf;"></div>
<span class="t" style="left:684.61px;top:115.92px;font-size:7.3px;line-height:8.76px;color:#2e2e2e;">N</span>
<div class="b " style="left:710.60px;top:114.50px;width:0.80px;height:9.00px;background:#cfcfcf;"></div>
<span class="t" style="left:730.16px;top:115.92px;font-size:7.3px;line-height:8.76px;color:#2e2e2e;">O</span>
<div class="b " style="left:754.60px;top:114.50px;width:0.80px;height:9.00px;background:#cfcfcf;"></div>
<div class="b " style="left:14.00px;top:123.60px;width:741.70px;height:0.70px;background:#c9c9c9;"></div>
<div class="b " style="left:0.00px;top:124.00px;width:14.00px;height:26.50px;background:#d5d5d5;"></div>
<div class="b " style="left:13.00px;top:124.00px;width:1.00px;height:26.50px;background:#217346;"></div>
<span class="t" style="left:5.06px;top:141.32px;font-size:7.8px;line-height:9.36px;color:#217346;">1</span>
<div class="b " style="left:0.00px;top:150.10px;width:13.50px;height:0.80px;background:#cfcfcf;"></div>
<span class="t" style="left:5.06px;top:161.82px;font-size:7.8px;line-height:9.36px;color:#333;">2</span>
<div class="b " style="left:0.00px;top:170.60px;width:13.50px;height:0.80px;background:#cfcfcf;"></div>
<span class="t" style="left:5.06px;top:171.82px;font-size:7.8px;line-height:9.36px;color:#333;">3</span>
<div class="b " style="left:0.00px;top:180.60px;width:13.50px;height:0.80px;background:#cfcfcf;"></div>
<span class="t" style="left:5.06px;top:195.32px;font-size:7.8px;line-height:9.36px;color:#333;">4</span>
<div class="b " style="left:0.00px;top:204.10px;width:13.50px;height:0.80px;background:#cfcfcf;"></div>
<span class="t" style="left:5.06px;top:210.32px;font-size:7.8px;line-height:9.36px;color:#333;">5</span>
<div class="b " style="left:0.00px;top:219.10px;width:13.50px;height:0.80px;background:#cfcfcf;"></div>
<span class="t" style="left:5.06px;top:225.32px;font-size:7.8px;line-height:9.36px;color:#333;">6</span>
<div class="b " style="left:0.00px;top:234.10px;width:13.50px;height:0.80px;background:#cfcfcf;"></div>
<span class="t" style="left:5.06px;top:240.32px;font-size:7.8px;line-height:9.36px;color:#333;">7</span>
<div class="b " style="left:0.00px;top:249.10px;width:13.50px;height:0.80px;background:#cfcfcf;"></div>
<span class="t" style="left:5.06px;top:261.82px;font-size:7.8px;line-height:9.36px;color:#333;">8</span>
<div class="b " style="left:0.00px;top:270.60px;width:13.50px;height:0.80px;background:#cfcfcf;"></div>
<span class="t" style="left:5.06px;top:277.32px;font-size:7.8px;line-height:9.36px;color:#333;">9</span>
<div class="b " style="left:0.00px;top:286.10px;width:13.50px;height:0.80px;background:#cfcfcf;"></div>
<span class="t" style="left:2.92px;top:300.32px;font-size:7.8px;line-height:9.36px;color:#333;">10</span>
<div class="b " style="left:0.00px;top:309.10px;width:13.50px;height:0.80px;background:#cfcfcf;"></div>
<span class="t" style="left:3.50px;top:320.82px;font-size:7.8px;line-height:9.36px;color:#333;">11</span>
<div class="b " style="left:0.00px;top:329.60px;width:13.50px;height:0.80px;background:#cfcfcf;"></div>
<span class="t" style="left:2.92px;top:340.82px;font-size:7.8px;line-height:9.36px;color:#333;">12</span>
<div class="b " style="left:0.00px;top:349.60px;width:13.50px;height:0.80px;background:#cfcfcf;"></div>
<span class="t" style="left:2.92px;top:361.32px;font-size:7.8px;line-height:9.36px;color:#333;">13</span>
<div class="b " style="left:0.00px;top:370.10px;width:13.50px;height:0.80px;background:#cfcfcf;"></div>
<span class="t" style="left:2.92px;top:380.82px;font-size:7.8px;line-height:9.36px;color:#333;">14</span>
<div class="b " style="left:0.00px;top:389.60px;width:13.50px;height:0.80px;background:#cfcfcf;"></div>
<div class="b " style="left:0.00px;top:403.10px;width:13.50px;height:0.80px;background:#cfcfcf;"></div>
<div class="b " style="left:13.60px;top:124.00px;width:0.70px;height:279.00px;background:#c9c9c9;"></div>
<div class="b " style="left:14.00px;top:124.00px;width:741.70px;height:26.70px;background:#404040;"></div>
<div class="b " style="left:310.50px;top:124.00px;width:55.00px;height:26.70px;background:#6699cc;"></div>
<div class="b " style="left:14.00px;top:150.50px;width:741.70px;height:20.70px;background:#6699cc;"></div>
<div class="b " style="left:72.50px;top:156.00px;width:72.50px;height:15.20px;background:#fff;"></div>
<div class="b" style="left:13px;top:124px;width:11px;height:28px;border:1px solid #217346;box-shadow:inset 0 0 0 1px rgba(255,255,255,0.25);"></div>
<div class="b " style="left:21.00px;top:149.00px;width:4.00px;height:4.00px;background:#404040;"></div>
<div class="b " style="left:22.00px;top:150.00px;width:3.00px;height:3.00px;background:#217346;"></div>
<svg class="b" style="left:23.00px;top:129.30px;" width="11" height="16" viewBox="0 0 11 16"><rect x="1.5" y="1.9" width="7.4" height="9.6" rx="2.6" fill="none" stroke="#fff" stroke-width="1.2"/><path d="M3.2 12.1h4l-0.9 2.4H4.1z" fill="#fff"/></svg>
<span class="t" style="left:35.20px;top:132.74px;font-size:7.6px;line-height:9.12px;color:#fff;transform:scaleX(0.933);">LUZ</span>
<div class="b " style="left:51.50px;top:133.00px;width:0.60px;height:9.00px;background:#9a9a9a;"></div>
<span class="t" style="left:54.30px;top:134.42px;font-size:3.3px;line-height:3.96px;color:#c8c8c8;transform:scaleX(0.933);">Planilhas</span>
<span class="t" style="left:54.30px;top:138.02px;font-size:3.3px;line-height:3.96px;color:#c8c8c8;transform:scaleX(0.945);">Empresariais</span>
<span class="t" style="left:94.75px;top:130.44px;font-size:6.6px;line-height:7.92px;color:#fff;font-weight:bold;transform:scaleX(0.922);">PERGUNTAS E</span>
<span class="t" style="left:98.75px;top:139.24px;font-size:6.6px;line-height:7.92px;color:#fff;font-weight:bold;transform:scaleX(0.883);">RESPOSTAS</span>
<span class="t" style="left:153.25px;top:130.44px;font-size:6.6px;line-height:7.92px;color:#fff;font-weight:bold;transform:scaleX(0.954);">AVALIAÇÃO</span>
<span class="t" style="left:150.00px;top:139.24px;font-size:6.6px;line-height:7.92px;color:#fff;font-weight:bold;transform:scaleX(0.943);">DA SITUAÇÃO</span>
<span class="t" style="left:204.25px;top:130.44px;font-size:6.6px;line-height:7.92px;color:#fff;font-weight:bold;transform:scaleX(0.944);">AVALIAÇÃO DE</span>
<span class="t" style="left:204.75px;top:139.24px;font-size:6.6px;line-height:7.92px;color:#fff;font-weight:bold;transform:scaleX(0.926);">EXPECTATIVAS</span>
<span class="t" style="left:263.00px;top:135.04px;font-size:6.6px;line-height:7.92px;color:#fff;font-weight:bold;transform:scaleX(0.912);">RELATÓRIOS</span>
<span class="t" style="left:318.00px;top:135.04px;font-size:6.6px;line-height:7.92px;color:#fff;font-weight:bold;transform:scaleX(0.932);">DASHBOARD</span>
<span class="t" style="left:370.25px;top:130.44px;font-size:6.6px;line-height:7.92px;color:#fff;font-weight:bold;transform:scaleX(0.921);">RELATÓRIO DE</span>
<span class="t" style="left:374.50px;top:139.24px;font-size:6.6px;line-height:7.92px;color:#fff;font-weight:bold;transform:scaleX(0.934);">IMPRESSÃO</span>
<span class="t" style="left:431.25px;top:135.04px;font-size:6.6px;line-height:7.92px;color:#fff;font-weight:bold;transform:scaleX(0.913);">INSTRUÇÕES</span>
<span class="t" style="left:87.00px;top:161.16px;font-size:6.4px;line-height:7.68px;color:#404040;font-weight:bold;transform:scaleX(0.974);">DIAGNÓSTICO</span>
<span class="t" style="left:172.75px;top:161.16px;font-size:6.4px;line-height:7.68px;color:#fff;font-weight:bold;transform:scaleX(0.932);">POR ÁREA</span>
<div class="b " style="left:29.00px;top:182.00px;width:131.00px;height:21.00px;background:#d9d9d9;"></div>
<span class="t" style="left:37.00px;top:188.14px;font-size:8.6px;line-height:10.32px;color:#404040;font-weight:bold;">Maturidade Nível 4</span>
<div class="b " style="left:162.00px;top:182.00px;width:37.50px;height:21.00px;background:#53b03f;"></div>
<span class="t" style="left:175.20px;top:186.30px;font-size:11.5px;line-height:13.80px;color:#fff;font-weight:bold;transform:scaleX(1.043);">=)</span>
<div class="b" style="left:28px;top:205px;width:174px;height:45px;background:#f2f2f2;border:1px solid #e0e0e0;"></div>
<span class="t" style="left:35.80px;top:213.30px;font-size:6.5px;line-height:7.80px;color:#595959;transform:scaleX(1.053);">Existem processos gerenciais formais e eles são</span>
<span class="t" style="left:35.80px;top:223.40px;font-size:6.5px;line-height:7.80px;color:#595959;transform:scaleX(1.093);">aplicados de maneira coordenada para atingir os</span>
<span class="t" style="left:35.80px;top:233.50px;font-size:6.5px;line-height:7.80px;color:#595959;transform:scaleX(1.086);">resultados esperados no planejamento tático.</span>
<span class="t" style="left:36.80px;top:255.14px;font-size:8.6px;line-height:10.32px;color:#000;font-weight:bold;transform:scaleX(0.965);">Pontuação entre áreas</span>
<span class="t" style="left:217.00px;top:255.14px;font-size:8.6px;line-height:10.32px;color:#000;font-weight:bold;transform:scaleX(0.948);">Pontuação atual</span>
<span class="t" style="left:384.00px;top:255.14px;font-size:8.6px;line-height:10.32px;color:#000;font-weight:bold;transform:scaleX(0.951);">Pontuação Desejada</span>
<span class="t" style="left:570.50px;top:255.14px;font-size:8.6px;line-height:10.32px;color:#000;font-weight:bold;transform:scaleX(0.946);">Pontuação atual x Pontuação desejada</span>
<div class="b" style="left:205px;top:181px;width:522px;height:69px;background:#fff;border:1px solid #d9d9d9;"></div>
<div class="b " style="left:213.00px;top:189.00px;width:403.00px;height:45.00px;background:#f2f2f2;"></div>
<div class="b " style="left:213.00px;top:233.80px;width:403.00px;height:0.70px;background:#d0d0d0;"></div>
<span class="t" style="left:229.85px;top:210.76px;font-size:5.3px;line-height:6.36px;color:#404040;">31%</span>
<span class="t" style="left:247.90px;top:210.76px;font-size:5.3px;line-height:6.36px;color:#404040;">31%</span>
<span class="t" style="left:265.95px;top:207.63px;font-size:5.3px;line-height:6.36px;color:#404040;">38%</span>
<span class="t" style="left:240.80px;top:238.54px;font-size:5.6px;line-height:6.72px;color:#4d4d4d;">Estratégia</span>
<span class="t" style="left:310.45px;top:185.28px;font-size:5.3px;line-height:6.36px;color:#404040;">88%</span>
<span class="t" style="left:328.50px;top:182.60px;font-size:5.3px;line-height:6.36px;color:#404040;">94%</span>
<span class="t" style="left:346.55px;top:216.13px;font-size:5.3px;line-height:6.36px;color:#404040;">19%</span>
<span class="t" style="left:323.15px;top:238.54px;font-size:5.6px;line-height:6.72px;color:#4d4d4d;transform:scaleX(0.946);">Finanças</span>
<span class="t" style="left:391.05px;top:188.41px;font-size:5.3px;line-height:6.36px;color:#404040;">81%</span>
<span class="t" style="left:409.10px;top:185.28px;font-size:5.3px;line-height:6.36px;color:#404040;">88%</span>
<span class="t" style="left:427.15px;top:216.13px;font-size:5.3px;line-height:6.36px;color:#404040;">19%</span>
<span class="t" style="left:402.25px;top:238.54px;font-size:5.6px;line-height:6.72px;color:#4d4d4d;">Marketing</span>
<span class="t" style="left:471.65px;top:194.67px;font-size:5.3px;line-height:6.36px;color:#404040;">67%</span>
<span class="t" style="left:489.70px;top:191.09px;font-size:5.3px;line-height:6.36px;color:#404040;">75%</span>
<span class="t" style="left:507.75px;top:205.85px;font-size:5.3px;line-height:6.36px;color:#404040;">42%</span>
<span class="t" style="left:482.10px;top:238.54px;font-size:5.6px;line-height:6.72px;color:#4d4d4d;transform:scaleX(0.949);">Operações</span>
<span class="t" style="left:552.25px;top:187.52px;font-size:5.3px;line-height:6.36px;color:#404040;">83%</span>
<span class="t" style="left:570.30px;top:194.67px;font-size:5.3px;line-height:6.36px;color:#404040;">67%</span>
<span class="t" style="left:588.35px;top:209.87px;font-size:5.3px;line-height:6.36px;color:#404040;">33%</span>
<span class="t" style="left:546.70px;top:238.54px;font-size:5.6px;line-height:6.72px;color:#4d4d4d;transform:scaleX(0.941);">Gestão de pessoas (GP)</span>
<svg class="b" style="left:0.00px;top:0.00px;" width="768" height="432" viewBox="0 0 768 432"><rect x="228.10" y="220.14" width="13.9" height="13.86" fill="#53b03f"/><rect x="246.15" y="220.14" width="13.9" height="13.86" fill="#6699cc"/><rect x="264.20" y="217.01" width="13.9" height="16.99" fill="#f2b70a"/><rect x="308.70" y="194.66" width="13.9" height="39.34" fill="#53b03f"/><rect x="326.75" y="191.98" width="13.9" height="42.02" fill="#6699cc"/><rect x="344.80" y="225.51" width="13.9" height="8.49" fill="#f2b70a"/><rect x="389.30" y="197.79" width="13.9" height="36.21" fill="#53b03f"/><rect x="407.35" y="194.66" width="13.9" height="39.34" fill="#6699cc"/><rect x="425.40" y="225.51" width="13.9" height="8.49" fill="#f2b70a"/><rect x="469.90" y="204.05" width="13.9" height="29.95" fill="#53b03f"/><rect x="487.95" y="200.47" width="13.9" height="33.52" fill="#6699cc"/><rect x="506.00" y="215.23" width="13.9" height="18.77" fill="#f2b70a"/><rect x="550.50" y="196.90" width="13.9" height="37.10" fill="#53b03f"/><rect x="568.55" y="204.05" width="13.9" height="29.95" fill="#6699cc"/><rect x="586.60" y="219.25" width="13.9" height="14.75" fill="#f2b70a"/></svg>
<div class="b " style="left:627.00px;top:202.40px;width:3.00px;height:3.00px;background:#53b03f;"></div>
<span class="t" style="left:631.50px;top:201.14px;font-size:5.6px;line-height:6.72px;color:#303030;">% de deficiência "Comportamental"</span>
<div class="b " style="left:627.00px;top:214.00px;width:3.00px;height:3.00px;background:#6699cc;"></div>
<span class="t" style="left:631.50px;top:212.74px;font-size:5.6px;line-height:6.72px;color:#303030;">% de deficiência "Ferramental"</span>
<div class="b " style="left:627.00px;top:225.60px;width:3.00px;height:3.00px;background:#f2b70a;"></div>
<span class="t" style="left:631.50px;top:224.34px;font-size:5.6px;line-height:6.72px;color:#303030;transform:scaleX(0.978);">% de deficiência "Técnica"</span>
<div class="b" style="left:27px;top:273px;width:175px;height:120px;background:#fff;border:1px solid #d9d9d9;"></div>
<div class="b " style="left:35.00px;top:281.00px;width:159.00px;height:88.30px;background:#f2f2f2;"></div>
<div class="b " style="left:35.00px;top:369.00px;width:159.00px;height:0.70px;background:#d0d0d0;"></div>
<span class="t" style="left:45.75px;top:294.62px;font-size:5.3px;line-height:6.36px;color:#404040;">67%</span>
<span class="t" style="left:77.50px;top:294.62px;font-size:5.3px;line-height:6.36px;color:#404040;">67%</span>
<span class="t" style="left:109.25px;top:317.82px;font-size:5.3px;line-height:6.36px;color:#404040;">63%</span>
<span class="t" style="left:141.00px;top:276.62px;font-size:5.3px;line-height:6.36px;color:#404040;">71%</span>
<span class="t" style="left:172.75px;top:328.62px;font-size:5.3px;line-height:6.36px;color:#404040;">60%</span>
<svg class="b" style="left:0.00px;top:0.00px;" width="768" height="432" viewBox="0 0 768 432"><rect x="46.20" y="304.00" width="9.5" height="65.00" fill="#4f81bd"/><rect x="77.95" y="304.00" width="9.5" height="65.00" fill="#4f81bd"/><rect x="109.70" y="327.20" width="9.5" height="41.80" fill="#4f81bd"/><rect x="141.45" y="286.00" width="9.5" height="83.00" fill="#4f81bd"/><rect x="173.20" y="338.00" width="9.5" height="31.00" fill="#4f81bd"/></svg>
<span class="t" style="left:38.50px;top:374.44px;font-size:5.6px;line-height:6.72px;color:#4d4d4d;">Estratégia</span>
<span class="t" style="left:71.95px;top:374.44px;font-size:5.6px;line-height:6.72px;color:#4d4d4d;transform:scaleX(0.946);">Finanças</span>
<span class="t" style="left:102.25px;top:374.44px;font-size:5.6px;line-height:6.72px;color:#4d4d4d;">Marketing</span>
<span class="t" style="left:133.20px;top:374.44px;font-size:5.6px;line-height:6.72px;color:#4d4d4d;transform:scaleX(0.949);">Operações</span>
<span class="t" style="left:165.75px;top:374.44px;font-size:5.6px;line-height:6.72px;color:#4d4d4d;transform:scaleX(0.948);">Gestão de</span>
<span class="t" style="left:163.00px;top:381.84px;font-size:5.6px;line-height:6.72px;color:#4d4d4d;transform:scaleX(0.876);">pessoas (GP)</span>
<div class="b" style="left:205px;top:273px;width:172px;height:119px;background:#fff;border:1px solid #d9d9d9;"></div>
<svg class="b" style="left:0.00px;top:0.00px;" width="768" height="432" viewBox="0 0 768 432"><polygon points="291.30,287.20 334.48,318.57 317.99,369.33 264.61,369.33 248.12,318.57" fill="none" stroke="#cfcfcf" stroke-width="0.6"/><polygon points="291.30,302.18 320.23,323.20 308.11,355.74 272.35,358.68 265.39,324.18" fill="#6699cc"/></svg>
<span class="t" style="left:278.80px;top:278.79px;font-size:5.6px;line-height:6.72px;color:#4d4d4d;">Estratégia</span>
<span class="t" style="left:335.50px;top:314.59px;font-size:5.6px;line-height:6.72px;color:#4d4d4d;transform:scaleX(0.946);">Finanças</span>
<span class="t" style="left:318.80px;top:367.39px;font-size:5.6px;line-height:6.72px;color:#4d4d4d;">Marketing</span>
<span class="t" style="left:237.00px;top:367.39px;font-size:5.6px;line-height:6.72px;color:#4d4d4d;transform:scaleX(0.949);">Operações</span>
<span class="t" style="left:218.25px;top:311.39px;font-size:5.6px;line-height:6.72px;color:#4d4d4d;transform:scaleX(0.948);">Gestão de</span>
<span class="t" style="left:215.00px;top:318.89px;font-size:5.6px;line-height:6.72px;color:#4d4d4d;transform:scaleX(0.905);">pessoas (GP)</span>
<span class="t" style="left:285.25px;top:289.51px;font-size:6.9px;line-height:8.28px;color:#262626;transform:scaleX(0.833);-webkit-text-stroke:0.25px #262626;">67%</span>
<span class="t" style="left:322.50px;top:316.31px;font-size:6.9px;line-height:8.28px;color:#262626;transform:scaleX(0.833);-webkit-text-stroke:0.25px #262626;">67%</span>
<span class="t" style="left:307.00px;top:359.31px;font-size:6.9px;line-height:8.28px;color:#262626;transform:scaleX(0.833);-webkit-text-stroke:0.25px #262626;">63%</span>
<span class="t" style="left:261.00px;top:361.81px;font-size:6.9px;line-height:8.28px;color:#262626;transform:scaleX(0.833);-webkit-text-stroke:0.25px #262626;">71%</span>
<span class="t" style="left:251.00px;top:317.81px;font-size:6.9px;line-height:8.28px;color:#262626;transform:scaleX(0.833);-webkit-text-stroke:0.25px #262626;">60%</span>
<div class="b" style="left:380px;top:273px;width:173px;height:119px;background:#fff;border:1px solid #d9d9d9;"></div>
<svg class="b" style="left:0.00px;top:0.00px;" width="768" height="432" viewBox="0 0 768 432"><polygon points="469.30,290.40 512.48,321.77 495.99,372.53 442.61,372.53 426.12,321.77" fill="none" stroke="#cfcfcf" stroke-width="0.6"/><polygon points="469.30,299.48 503.84,324.58 490.65,365.18 447.95,365.18 434.76,324.58" fill="none" stroke="#cfcfcf" stroke-width="0.6"/><polygon points="469.30,303.34 506.43,323.73 489.18,363.16 449.55,362.98 439.72,326.19" fill="#ffc000"/></svg>
<span class="t" style="left:456.80px;top:279.59px;font-size:5.6px;line-height:6.72px;color:#4d4d4d;">Estratégia</span>
<span class="t" style="left:514.30px;top:317.79px;font-size:5.6px;line-height:6.72px;color:#4d4d4d;transform:scaleX(0.946);">Finanças</span>
<span class="t" style="left:497.50px;top:372.09px;font-size:5.6px;line-height:6.72px;color:#4d4d4d;transform:scaleX(1.037);">Marketing</span>
<span class="t" style="left:414.50px;top:372.09px;font-size:5.6px;line-height:6.72px;color:#4d4d4d;transform:scaleX(0.949);">Operações</span>
<span class="t" style="left:395.25px;top:314.09px;font-size:5.6px;line-height:6.72px;color:#4d4d4d;transform:scaleX(0.948);">Gestão de</span>
<span class="t" style="left:392.00px;top:321.59px;font-size:5.6px;line-height:6.72px;color:#4d4d4d;transform:scaleX(0.889);">Pessoas (GP)</span>
<span class="t" style="left:463.55px;top:289.81px;font-size:6.9px;line-height:8.28px;color:#262626;transform:scaleX(0.833);-webkit-text-stroke:0.25px #262626;">70%</span>
<span class="t" style="left:510.00px;top:317.51px;font-size:6.9px;line-height:8.28px;color:#262626;transform:scaleX(0.833);-webkit-text-stroke:0.25px #262626;">84%</span>
<span class="t" style="left:489.00px;top:366.31px;font-size:6.9px;line-height:8.28px;color:#262626;transform:scaleX(0.833);-webkit-text-stroke:0.25px #262626;">72%</span>
<span class="t" style="left:438.50px;top:366.31px;font-size:6.9px;line-height:8.28px;color:#262626;transform:scaleX(0.833);-webkit-text-stroke:0.25px #262626;">71%</span>
<span class="t" style="left:425.00px;top:319.31px;font-size:6.9px;line-height:8.28px;color:#262626;transform:scaleX(0.833);-webkit-text-stroke:0.25px #262626;">67%</span>
<div class="b" style="left:556px;top:273px;width:171px;height:119px;background:#fff;border:1px solid #d9d9d9;"></div>
<svg class="b" style="left:0.00px;top:0.00px;" width="768" height="432" viewBox="0 0 768 432"><polygon points="643.90,285.80 687.17,317.24 670.64,368.11 617.16,368.11 600.63,317.24" fill="none" stroke="#cfcfcf" stroke-width="0.6"/><polygon points="643.90,308.32 665.75,324.20 657.41,349.89 630.39,349.89 622.05,324.20" fill="none" stroke="#cfcfcf" stroke-width="0.6"/><polygon points="643.80,294.40 675.00,321.20 666.20,361.00 628.30,352.90 614.80,321.70" fill="none" stroke="#ffc000" stroke-width="1.3" stroke-linejoin="round"/><polygon points="643.80,300.40 673.90,321.70 660.70,353.60 625.25,356.40 617.10,322.10" fill="none" stroke="#6699cc" stroke-width="1.3" stroke-linejoin="round"/><path d="M581.5 378.8h12.8" stroke="#ffc000" stroke-width="1"/><path d="M650 378.8h12.8" stroke="#6699cc" stroke-width="1"/></svg>
<span class="t" style="left:631.50px;top:276.39px;font-size:5.6px;line-height:6.72px;color:#4d4d4d;">Estratégia</span>
<span class="t" style="left:689.00px;top:313.09px;font-size:5.6px;line-height:6.72px;color:#4d4d4d;transform:scaleX(0.946);">Finanças</span>
<span class="t" style="left:671.50px;top:365.09px;font-size:5.6px;line-height:6.72px;color:#4d4d4d;transform:scaleX(1.037);">Marketing</span>
<span class="t" style="left:589.50px;top:365.39px;font-size:5.6px;line-height:6.72px;color:#4d4d4d;transform:scaleX(0.949);">Operações</span>
<span class="t" style="left:571.25px;top:309.69px;font-size:5.6px;line-height:6.72px;color:#4d4d4d;transform:scaleX(0.948);">Gestão de</span>
<span class="t" style="left:568.00px;top:317.09px;font-size:5.6px;line-height:6.72px;color:#4d4d4d;transform:scaleX(0.889);">Pessoas (GP)</span>
<span class="t" style="left:596.00px;top:375.89px;font-size:5.6px;line-height:6.72px;color:#404040;transform:scaleX(0.960);">Pontuação desejada</span>
<span class="t" style="left:664.50px;top:375.89px;font-size:5.6px;line-height:6.72px;color:#404040;">Pontuação atual</span>
<div class="b " style="left:755.70px;top:113.50px;width:2.30px;height:290.00px;background:#efefef;"></div>
<div class="b " style="left:758.00px;top:113.50px;width:8.00px;height:290.00px;background:#dcdcdc;"></div>
<div class="b " style="left:766.00px;top:113.50px;width:2.00px;height:290.00px;background:#ececec;"></div>
<div class="b" style="left:758.2px;top:115.5px;width:8px;height:8px;background:#fff;border:0.6px solid #c8c8c8;"></div>
<svg class="b" style="left:760.20px;top:118.00px;" width="4" height="3" viewBox="0 0 4 3"><path d="M0 2.4l2-2.2 2 2.2z" fill="#444"/></svg>
<div class="b" style="left:758.2px;top:124px;width:8px;height:9.2px;background:#fff;border:0.6px solid #c8c8c8;"></div>
<div class="b" style="left:758.2px;top:395px;width:8px;height:8px;background:#fff;border:0.6px solid #c8c8c8;"></div>
<svg class="b" style="left:760.20px;top:398.00px;" width="4" height="3" viewBox="0 0 4 3"><path d="M0 0.2l2 2.2 2-2.2z" fill="#444"/></svg>
<div class="b " style="left:0.00px;top:403.00px;width:768.00px;height:15.50px;background:#e6e6e6;"></div>
<div class="b " style="left:0.00px;top:403.00px;width:768.00px;height:0.70px;background:#c6c6c6;"></div>
<svg class="b" style="left:14.50px;top:408.50px;" width="4" height="5" viewBox="0 0 4 5"><path d="M3.2 0.4L0.8 2.5l2.4 2.1z" fill="#c0c0c0"/></svg>
<svg class="b" style="left:30.50px;top:408.50px;" width="4" height="5" viewBox="0 0 4 5"><path d="M0.8 0.4l2.4 2.1L0.8 4.6z" fill="#217346"/></svg>
<span class="t" style="left:62.50px;top:407.46px;font-size:6.9px;line-height:8.28px;color:#444;transform:scaleX(0.973);">Per_res</span>
<span class="t" style="left:101.50px;top:407.46px;font-size:6.9px;line-height:8.28px;color:#444;transform:scaleX(0.926);">Ava_1</span>
<span class="t" style="left:134.50px;top:407.46px;font-size:6.9px;line-height:8.28px;color:#444;transform:scaleX(0.926);">Ava_2</span>
<span class="t" style="left:167.50px;top:407.46px;font-size:6.9px;line-height:8.28px;color:#444;transform:scaleX(0.926);">Ava_3</span>
<span class="t" style="left:200.50px;top:407.46px;font-size:6.9px;line-height:8.28px;color:#444;transform:scaleX(0.926);">Ava_4</span>
<span class="t" style="left:234.00px;top:407.46px;font-size:6.9px;line-height:8.28px;color:#444;transform:scaleX(0.926);">Ava_5</span>
<span class="t" style="left:267.00px;top:407.46px;font-size:6.9px;line-height:8.28px;color:#444;">Ava_exp</span>
<span class="t" style="left:308.00px;top:407.46px;font-size:6.9px;line-height:8.28px;color:#444;transform:scaleX(0.972);">Ran_ge</span>
<span class="t" style="left:346.00px;top:407.46px;font-size:6.9px;line-height:8.28px;color:#444;transform:scaleX(0.946);">Ran_es</span>
<div class="b " style="left:56.00px;top:406.00px;width:1.00px;height:10.00px;background:#bdbdbd;"></div>
<div class="b " style="left:94.00px;top:406.00px;width:1.00px;height:10.00px;background:#bdbdbd;"></div>
<div class="b " style="left:127.00px;top:406.00px;width:1.00px;height:10.00px;background:#bdbdbd;"></div>
<div class="b " style="left:160.00px;top:406.00px;width:1.00px;height:10.00px;background:#bdbdbd;"></div>
<div class="b " style="left:193.00px;top:406.00px;width:1.00px;height:10.00px;background:#bdbdbd;"></div>
<div class="b " style="left:226.00px;top:406.00px;width:1.00px;height:10.00px;background:#bdbdbd;"></div>
<div class="b " style="left:260.00px;top:406.00px;width:1.00px;height:10.00px;background:#bdbdbd;"></div>
<div class="b " style="left:301.00px;top:406.00px;width:1.00px;height:10.00px;background:#bdbdbd;"></div>
<div class="b " style="left:339.00px;top:406.00px;width:1.00px;height:10.00px;background:#bdbdbd;"></div>
<div class="b " style="left:462.00px;top:406.00px;width:1.00px;height:10.00px;background:#bdbdbd;"></div>
<div class="b " style="left:498.00px;top:406.00px;width:1.00px;height:10.00px;background:#bdbdbd;"></div>
<div class="b " style="left:522.00px;top:406.00px;width:1.00px;height:10.00px;background:#bdbdbd;"></div>
<div class="b " style="left:375.50px;top:403.60px;width:45.50px;height:14.90px;background:#fff;"></div>
<div class="b " style="left:375.50px;top:416.60px;width:45.50px;height:1.60px;background:#217346;"></div>
<span class="t" style="left:383.00px;top:407.46px;font-size:6.9px;line-height:8.28px;color:#217346;font-weight:bold;transform:scaleX(0.978);">Dash_dia</span>
<span class="t" style="left:427.50px;top:407.46px;font-size:6.9px;line-height:8.28px;color:#444;">Dash_pa</span>
<span class="t" style="left:469.50px;top:407.46px;font-size:6.9px;line-height:8.28px;color:#444;transform:scaleX(0.978);">Rel_im</span>
<span class="t" style="left:505.50px;top:407.46px;font-size:6.9px;line-height:8.28px;color:#444;transform:scaleX(1.021);">INI</span>
<span class="t" style="left:529.50px;top:405.60px;font-size:7.5px;line-height:9.00px;color:#217346;font-weight:bold;">...</span>
<svg class="b" style="left:543.00px;top:406.50px;" width="9" height="9" viewBox="0 0 9 9"><circle cx="4.5" cy="4.5" r="3.8" fill="none" stroke="#777" stroke-width="0.7"/><path d="M2.4 4.5h4.2M4.5 2.4v4.2" stroke="#777" stroke-width="0.8"/></svg>
<div class="b " style="left:563.40px;top:408.50px;width:0.90px;height:0.90px;background:#b8b8b8;"></div>
<div class="b " style="left:563.40px;top:410.80px;width:0.90px;height:0.90px;background:#b8b8b8;"></div>
<div class="b " style="left:563.40px;top:413.10px;width:0.90px;height:0.90px;background:#b8b8b8;"></div>
<div class="b " style="left:572.00px;top:407.00px;width:183.50px;height:9.00px;background:#dcdcdc;"></div>
<div class="b" style="left:572px;top:407px;width:9px;height:9px;background:#fff;border:0.6px solid #c8c8c8;"></div>
<svg class="b" style="left:575.00px;top:409.50px;" width="3" height="4" viewBox="0 0 3 4"><path d="M2.6 0l-2.4 2 2.4 2z" fill="#444"/></svg>
<div class="b" style="left:581.3px;top:407px;width:25.5px;height:9px;background:#fff;border:0.6px solid #c8c8c8;"></div>
<div class="b" style="left:746.5px;top:407px;width:9px;height:9px;background:#fff;border:0.6px solid #c8c8c8;"></div>
<svg class="b" style="left:750.00px;top:409.50px;" width="3" height="4" viewBox="0 0 3 4"><path d="M0.2 0l2.4 2-2.4 2z" fill="#444"/></svg>
<div class="b " style="left:0.00px;top:418.50px;width:768.00px;height:13.50px;background:#f3f3f3;"></div>
<span class="t" style="left:4.00px;top:421.78px;font-size:6.7px;line-height:8.04px;color:#333;">Pronto</span>
<svg class="b" style="left:34.50px;top:421.50px;" width="8" height="8" viewBox="0 0 8 8"><rect x="0.4" y="1.6" width="7" height="6" fill="#fff" stroke="#666" stroke-width="0.7"/><rect x="0.4" y="0.4" width="2.6" height="2.4" fill="#555"/><path d="M2 4.4h4M2 6h4M4 3.4v3.8" stroke="#888" stroke-width="0.5"/></svg>
<div class="b " style="left:611.00px;top:418.50px;width:20.50px;height:12.00px;background:#c9c9c9;"></div>
<svg class="b" style="left:617.00px;top:421.00px;" width="8" height="8" viewBox="0 0 8 8"><rect x="0.4" y="0.4" width="7.2" height="7.2" fill="none" stroke="#555" stroke-width="0.7"/><path d="M0.4 2.8h7.2M0.4 5.2h7.2M2.8 0.4v7.2M5.2 0.4v7.2" stroke="#555" stroke-width="0.6"/></svg>
<svg class="b" style="left:638.50px;top:421.00px;" width="8" height="8" viewBox="0 0 8 8"><rect x="0.4" y="0.4" width="7.2" height="7.2" fill="none" stroke="#666" stroke-width="0.7"/><rect x="2.2" y="1.8" width="3.6" height="5" fill="none" stroke="#666" stroke-width="0.6"/></svg>
<svg class="b" style="left:660.00px;top:421.00px;" width="8" height="8" viewBox="0 0 8 8"><rect x="0.4" y="0.4" width="7.2" height="7.2" fill="none" stroke="#666" stroke-width="0.7"/><path d="M2.8 0.4v3.6h2.6V0.4" fill="none" stroke="#666" stroke-width="0.6"/></svg>
<div class="b " style="left:677.00px;top:424.80px;width:3.60px;height:0.80px;background:#444;"></div>
<div class="b " style="left:684.00px;top:425.00px;width:55.00px;height:1.00px;background:#b4b4b4;"></div>
<div class="b " style="left:707.40px;top:421.50px;width:2.20px;height:7.20px;background:#555;"></div>
<div class="b " style="left:741.30px;top:424.80px;width:4.00px;height:0.80px;background:#444;"></div>
<div class="b " style="left:742.90px;top:423.20px;width:0.80px;height:4.00px;background:#444;"></div>
<span class="t" style="left:751.50px;top:421.96px;font-size:6.4px;line-height:7.68px;color:#333;transform:scaleX(0.937);">90%</span>
<div class="b " style="left:0.00px;top:430.50px;width:768.00px;height:1.50px;background:#bdbdbd;"></div>
<div class="b " style="left:0.00px;top:431.00px;width:27.00px;height:1.00px;background:#333;"></div>
<div class="b " style="left:220.00px;top:430.50px;width:548.00px;height:1.50px;background:#2b2b2b;"></div>
</div></body></html>
